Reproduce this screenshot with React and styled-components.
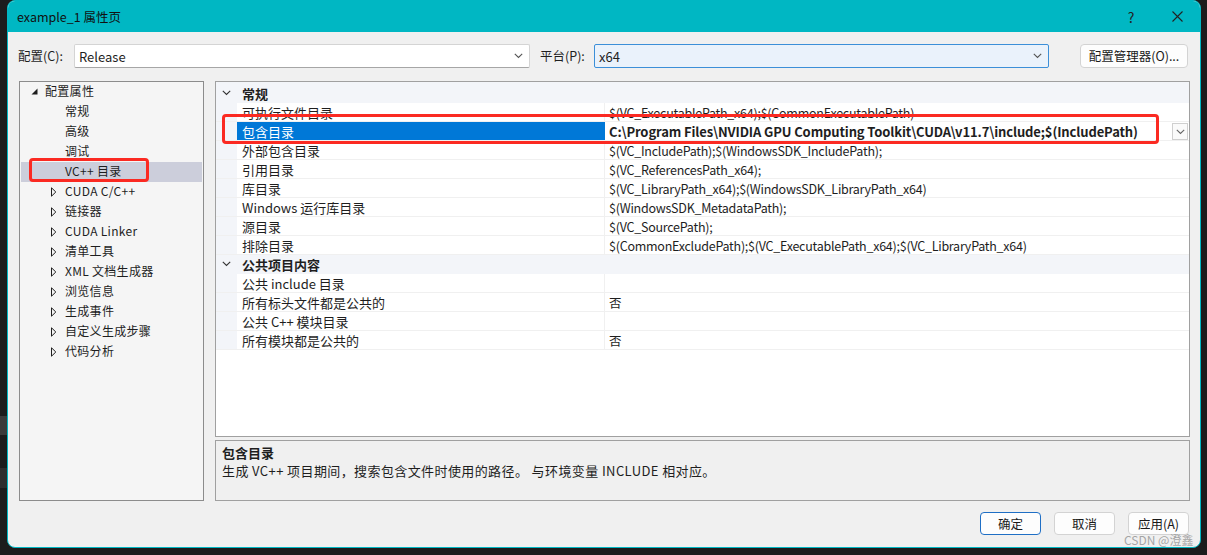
import React from "react";
import styled, { createGlobalStyle, css } from "styled-components";

const GlobalStyle = createGlobalStyle`
  html, body {
    margin: 0;
    padding: 0;
    background: #1c1c1c;
  }
  * {
    box-sizing: border-box;
  }
`;

const FONT = `"Noto Sans CJK SC", "Noto Sans", sans-serif`;

const Page = styled.div`
  position: relative;
  width: 1207px;
  height: 555px;
  padding: 0 6px 7px 7px;
  display: flex;
  font-family: ${FONT};
  color: #1e1e1e;
  background-color: #1c1c1c;
  background-image: linear-gradient(
    to bottom,
    transparent 416px,
    #3a3a3a 416px,
    #3a3a3a 435px,
    transparent 435px,
    transparent 468px,
    #2e2e2e 468px,
    #2e2e2e 488px,
    transparent 488px
  );
  background-size: 7px 100%;
  background-repeat: no-repeat;
`;

const Window = styled.div`
  flex: 1;
  display: flex;
  flex-direction: column;
  background: #f0f0f0;
  border: 1px solid #00b7c3;
  border-radius: 8px;
  overflow: hidden;
`;

const TitleBar = styled.div`
  height: 31px;
  flex: 0 0 auto;
  background: #00b7c3;
  display: flex;
  align-items: center;
  padding: 0 0 0 9px;
  font-size: 12.5px;
  color: #111;
`;

const Title = styled.div`
  flex: 1;
`;

const TitleButton = styled.div`
  width: 46px;
  height: 31px;
  display: flex;
  align-items: center;
  justify-content: center;
  font-size: 14px;
  color: #222;
`;

const Body = styled.div`
  flex: 1;
  display: flex;
  flex-direction: column;
  padding: 11px 10px 0 10px;
`;

const ConfigRow = styled.div`
  height: 25px;
  display: flex;
  align-items: center;
  font-size: 12.5px;
`;

const Label = styled.div`
  width: ${(p) => p.$w}px;
  flex: 0 0 auto;
`;

const Combo = styled.div`
  width: ${(p) => p.$w}px;
  height: 24px;
  margin-top: 1px;
  margin-right: 10px;
  display: flex;
  align-items: center;
  padding: 0 6px 0 4px;
  border-radius: 2px;
  font-size: 13px;
  ${(p) =>
    p.$focused
      ? css`
          background: #eaf2fb;
          border: 1px solid #3c8fd8;
        `
      : css`
          background: #ffffff;
          border: 1px solid #d4d4d4;
          border-bottom-color: #a6a6a6;
        `}
  span {
    flex: 1;
  }
`;

const Spacer = styled.div`
  flex: 1;
`;

const Button = styled.button`
  width: ${(p) => p.$w || 61}px;
  height: ${(p) => p.$h || 23}px;
  margin-right: ${(p) => p.$mr || 0}px;
  font-family: ${FONT};
  font-size: 12.5px;
  color: #1a1a1a;
  background: #fdfdfd;
  border: 1px solid ${(p) => (p.$primary ? "#1f6fc5" : "#d3d3d3")};
  border-radius: 4px;
  padding: 0;
  cursor: pointer;
`;

const Main = styled.div`
  margin-top: 13px;
  height: 420px;
  display: flex;
  gap: 11px;
  padding-left: 1px;
`;

const Tree = styled.div`
  width: 185px;
  background: #f5f5f5;
  border: 1px solid #8c8c8c;
  font-size: 12px;
  letter-spacing: 0.3px;
`;

const TreeRow = styled.div`
  height: 20px;
  display: flex;
  align-items: center;
  padding-left: ${(p) => 10 + p.$level * 20}px;
  padding-bottom: 3px;
  margin: 0 1px;
  background: ${(p) => (p.$selected ? "#cccedb" : "transparent")};
  white-space: nowrap;
`;

const Arrow = styled.div`
  width: 14px;
  height: 17px;
  flex: 0 0 auto;
  display: flex;
  align-items: center;
  padding-top: 2px;
`;

const RightColumn = styled.div`
  flex: 1;
  display: flex;
  flex-direction: column;
  gap: 3px;
`;

const Grid = styled.div`
  height: 356px;
  background: #ffffff;
  border: 1px solid #a0a0a0;
  font-size: 13px;
`;

const Category = styled.div`
  height: ${(p) => (p.$first ? 21 : 19)}px;
  padding-top: ${(p) => (p.$first ? 2 : 0)}px;
  display: flex;
  align-items: center;
  background: #f3f5f9;
  font-weight: bold;
  border-bottom: 1px solid #f3f5f9;
`;

const Gutter = styled.div`
  width: 21px;
  height: 100%;
  flex: 0 0 auto;
  display: flex;
  align-items: center;
  justify-content: center;
  background: #f3f5f9;
`;

const PropRow = styled.div`
  height: 19px;
  display: flex;
  border-bottom: 1px solid #f0f0f0;
  white-space: nowrap;
`;

const NameCell = styled.div`
  width: 368px;
  flex: 0 0 auto;
  display: flex;
  align-items: center;
  padding-left: 5px;
  border-right: 1px solid ${(p) => (p.$plain ? "transparent" : "#f0f0f0")};
  ${(p) =>
    p.$selected &&
    css`
      background: #0078d7;
      color: #ffffff;
      border-right-color: #0078d7;
    `}
`;

const ValueCell = styled.div`
  flex: 1;
  display: flex;
  align-items: center;
  padding-left: 4px;
  overflow: hidden;
  ${(p) =>
    p.$bold
      ? css`
          font-weight: bold;
          font-size: 13px;
          letter-spacing: -0.12px;
        `
      : css`
          font-size: 12.5px;
          letter-spacing: -0.25px;
        `}
  span {
    flex: 1;
  }
`;

const DropButton = styled.div`
  width: 16px;
  height: 17px;
  margin: 1px 1px 0 0;
  border: 1px solid #cfcfcf;
  background: #fafafa;
  display: flex;
  align-items: center;
  justify-content: center;
`;

const Description = styled.div`
  flex: 1;
  background: #f0f0f0;
  border: 1px solid #a0a0a0;
  padding: 3px 6px;
  font-size: 13px;
  line-height: 18px;
  h4 {
    margin: 0;
    font-size: 13px;
    font-weight: bold;
  }
  p {
    margin: 0;
    letter-spacing: 0.4px;
  }
`;

const Footer = styled.div`
  margin-top: 11px;
  display: flex;
  justify-content: flex-end;
  gap: 13px;
  padding-right: 1px;
`;

const Highlight = styled.div`
  position: absolute;
  left: ${(p) => p.$x}px;
  top: ${(p) => p.$y}px;
  width: ${(p) => p.$w}px;
  height: ${(p) => p.$h}px;
  border: 3px solid #fb2a22;
  border-radius: 4px;
  pointer-events: none;
`;

const Watermark = styled.div`
  position: absolute;
  left: 1124px;
  top: 531px;
  font-size: 12px;
  color: rgba(150, 150, 150, 0.85);
  font-family: ${FONT};
`;

const Chevron = ({ color = "#333", w = 9 }) => (
  <svg width={w} height="6" viewBox="0 0 9 6">
    <path d="M0.8 0.8 L4.5 4.5 L8.2 0.8" fill="none" stroke={color} strokeWidth="1.1" />
  </svg>
);

const treeItems = [
  { label: "配置属性", level: 0, open: true },
  { label: "常规", level: 1 },
  { label: "高级", level: 1 },
  { label: "调试", level: 1 },
  { label: "VC++ 目录", level: 1, selected: true },
  { label: "CUDA C/C++", level: 1, closed: true },
  { label: "链接器", level: 1, closed: true },
  { label: "CUDA Linker", level: 1, closed: true },
  { label: "清单工具", level: 1, closed: true },
  { label: "XML 文档生成器", level: 1, closed: true },
  { label: "浏览信息", level: 1, closed: true },
  { label: "生成事件", level: 1, closed: true },
  { label: "自定义生成步骤", level: 1, closed: true },
  { label: "代码分析", level: 1, closed: true },
];

const sections = [
  {
    title: "常规",
    rows: [
      ["可执行文件目录", "$(VC_ExecutablePath_x64);$(CommonExecutablePath)"],
      [
        "包含目录",
        "C:\\Program Files\\NVIDIA GPU Computing Toolkit\\CUDA\\v11.7\\include;$(IncludePath)",
        true,
      ],
      ["外部包含目录", "$(VC_IncludePath);$(WindowsSDK_IncludePath);"],
      ["引用目录", "$(VC_ReferencesPath_x64);"],
      ["库目录", "$(VC_LibraryPath_x64);$(WindowsSDK_LibraryPath_x64)"],
      ["Windows 运行库目录", "$(WindowsSDK_MetadataPath);"],
      ["源目录", "$(VC_SourcePath);"],
      ["排除目录", "$(CommonExcludePath);$(VC_ExecutablePath_x64);$(VC_LibraryPath_x64)"],
    ],
  },
  {
    title: "公共项目内容",
    rows: [
      ["公共 include 目录", ""],
      ["所有标头文件都是公共的", "否"],
      ["公共 C++ 模块目录", ""],
      ["所有模块都是公共的", "否"],
    ],
  },
];

const TreeArrow = ({ open, closed }) => {
  if (open)
    return (
      <svg width="7" height="7" viewBox="0 0 7 7">
        <polygon points="6.5,0.5 6.5,6.5 0.5,6.5" fill="#1e1e1e" />
      </svg>
    );
  if (closed)
    return (
      <svg width="6" height="10" viewBox="0 0 6 10">
        <polygon points="0.5,0.8 4.8,5 0.5,9.2" fill="none" stroke="#1e1e1e" strokeWidth="1" />
      </svg>
    );
  return null;
};

const App = () => {
  return (
    <>
      <GlobalStyle />
      <Page>
        <Window>
          <TitleBar>
            <Title>example_1 属性页</Title>
            <TitleButton>?</TitleButton>
            <TitleButton>
              <svg width="11" height="11" viewBox="0 0 11 11">
                <path d="M0.5 0.5 L10.5 10.5 M10.5 0.5 L0.5 10.5" stroke="#222" strokeWidth="1.1" />
              </svg>
            </TitleButton>
          </TitleBar>
          <Body>
            <ConfigRow>
              <Label $w={56}>配置(C):</Label>
              <Combo $w={456}>
                <span>Release</span>
                <Chevron color="#555" />
              </Combo>
              <Label $w={54}>平台(P):</Label>
              <Combo $w={455} $focused>
                <span>x64</span>
                <Chevron color="#555" />
              </Combo>
              <Spacer />
              <Button $w={108} $h={24} $mr={2}>
                配置管理器(O)...
              </Button>
            </ConfigRow>
            <Main>
              <Tree>
                {treeItems.map((item) => (
                  <TreeRow key={item.label} $level={item.level} $selected={item.selected}>
                    <Arrow>
                      <TreeArrow open={item.open} closed={item.closed} />
                    </Arrow>
                    {item.label}
                  </TreeRow>
                ))}
              </Tree>
              <RightColumn>
                <Grid>
                  {sections.map((section, i) => (
                    <div key={section.title}>
                      <Category $first={i === 0}>
                        <Gutter>
                          <Chevron color="#333" />
                        </Gutter>
                        <NameCell $plain>{section.title}</NameCell>
                      </Category>
                      {section.rows.map(([name, value, selected]) => (
                        <PropRow key={name}>
                          <Gutter />
                          <NameCell $selected={selected}>{name}</NameCell>
                          <ValueCell $bold={selected}>
                            <span>{value}</span>
                            {selected && (
                              <DropButton>
                                <Chevron color="#666" w={9} />
                              </DropButton>
                            )}
                          </ValueCell>
                        </PropRow>
                      ))}
                    </div>
                  ))}
                </Grid>
                <Description>
                  <h4>包含目录</h4>
                  <p>生成 VC++ 项目期间，搜索包含文件时使用的路径。 与环境变量 INCLUDE 相对应。</p>
                </Description>
              </RightColumn>
            </Main>
            <Footer>
              <Button $primary>确定</Button>
              <Button>取消</Button>
              <Button>应用(A)</Button>
            </Footer>
          </Body>
        </Window>
        <Highlight $x={222} $y={114} $w={937} $h={30} />
        <Highlight $x={29} $y={158} $w={120} $h={24} />
        <Watermark>CSDN @澄鑫</Watermark>
      </Page>
    </>
  );
};

export default App;
